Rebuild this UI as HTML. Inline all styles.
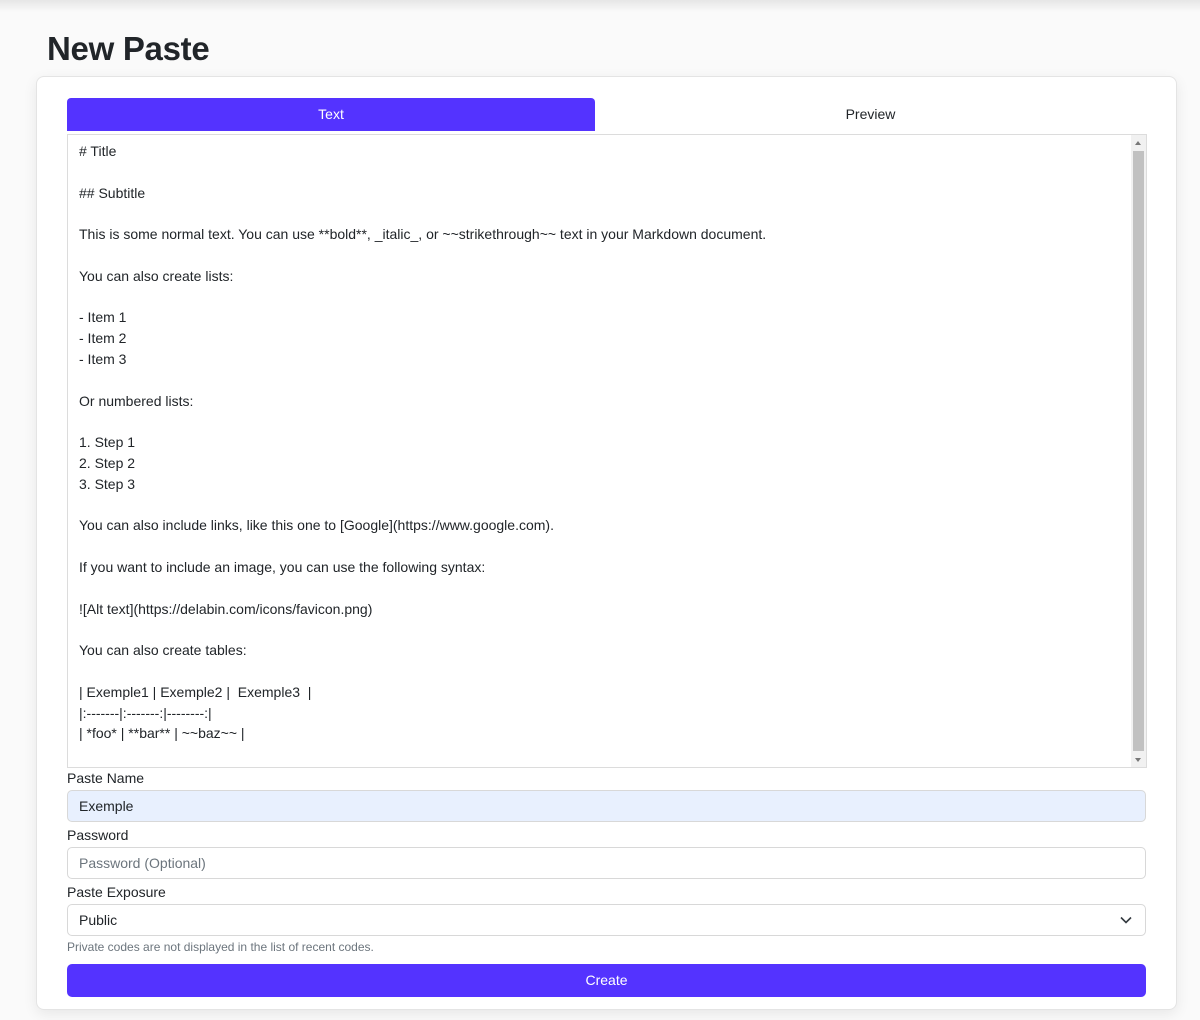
<!DOCTYPE html>
<html><head><meta charset="utf-8"><style>
*{box-sizing:border-box;margin:0;padding:0}
html,body{width:1200px;height:1020px;overflow:hidden;background:#fafafa;font-family:"Liberation Sans",sans-serif;color:#212529}
.topbar{position:absolute;left:0;top:0;width:1200px;height:12px;background:linear-gradient(#e6e6e6,#fafafa)}
h1{position:absolute;left:47px;top:30px;font-size:33px;font-weight:600;letter-spacing:-0.3px}
.card{position:absolute;left:36px;top:76px;width:1141px;height:934px;background:#fff;border:1px solid #e4e4e4;border-radius:8px;box-shadow:0 4px 14px rgba(0,0,0,.08)}
.tab{position:absolute;top:98px;height:33px;font-size:14px;text-align:center;line-height:33px}
.t1{left:67px;width:528px;background:#5433ff;color:#fff;border-radius:4px 4px 0 0}
.t2{left:595px;width:551px;color:#212529}
.ta{position:absolute;left:67px;top:134px;width:1080px;height:634px;border:1px solid #dcdcdc;background:#fff}
.txt{position:absolute;left:11px;top:6px;font-size:14px;line-height:20.8px;white-space:pre;color:#212529}
.sb{position:absolute;right:0;top:0;width:15px;height:632px;background:#f1f1f1}
.thumb{position:absolute;left:2px;top:16px;width:11px;height:600px;background:#c1c1c1}
.au{position:absolute;left:4px;top:6px;border:3.5px solid transparent;border-bottom:4px solid #777;border-top:0;width:0}
.ad{position:absolute;left:4px;bottom:5px;border:3.5px solid transparent;border-top:4px solid #777;border-bottom:0;width:0}
.lbl{position:absolute;left:67px;font-size:14px}
.inp{position:absolute;left:67px;width:1079px;height:32px;border:1px solid #d8d8d8;border-radius:5px;font-size:14px;line-height:30px;padding-left:11px;background:#fff}
.help{position:absolute;left:67px;top:940px;font-size:12px;color:#6c757d}
.btn{position:absolute;left:67px;top:964px;width:1079px;height:33px;background:#5433ff;border-radius:5px;color:#fff;font-size:14px;text-align:center;line-height:33px}
</style></head><body>
<div class="topbar"></div>
<h1>New Paste</h1>
<div class="card"></div>
<div class="tab t1">Text</div>
<div class="tab t2">Preview</div>
<div class="ta"><div class="txt"># Title

## Subtitle

This is some normal text. You can use **bold**, _italic_, or ~~strikethrough~~ text in your Markdown document.

You can also create lists:

- Item 1
- Item 2
- Item 3

Or numbered lists:

1. Step 1
2. Step 2
3. Step 3

You can also include links, like this one to [Google](https://www.google.com).

If you want to include an image, you can use the following syntax:

![Alt text](https://delabin.com/icons/favicon.png)

You can also create tables:

| Exemple1 | Exemple2 |  Exemple3  |
|:-------|:-------:|--------:|
| *foo* | **bar** | ~~baz~~ |</div>
<div class="sb"><div class="au"></div><div class="thumb"></div><div class="ad"></div></div></div>
<div class="lbl" style="top:770px">Paste Name</div>
<div class="inp" style="top:790px;background:#e8f0fe">Exemple</div>
<div class="lbl" style="top:827px">Password</div>
<div class="inp" style="top:847px;color:#6c757d">Password (Optional)</div>
<div class="lbl" style="top:884px">Paste Exposure</div>
<div class="inp" style="top:904px">Public<svg style="position:absolute;right:13px;top:11px" width="12" height="8" viewBox="0 0 12 8"><path d="M1 1.5l5 5 5-5" fill="none" stroke="#343a40" stroke-width="1.6"/></svg></div>
<div class="help">Private codes are not displayed in the list of recent codes.</div>
<div class="btn">Create</div>
</body></html>
